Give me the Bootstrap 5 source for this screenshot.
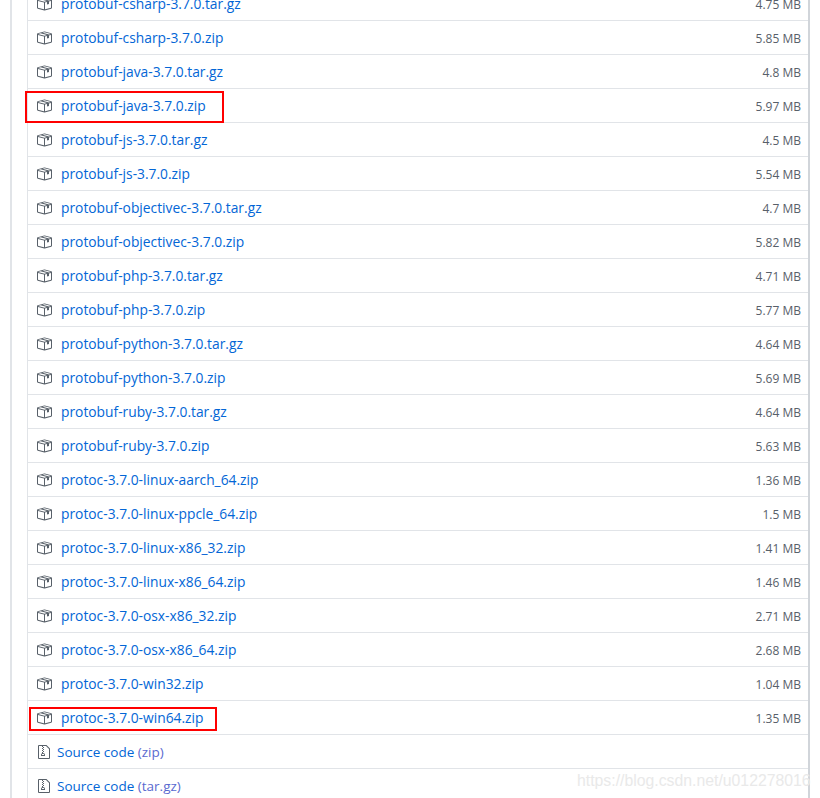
<!DOCTYPE html>
<html lang="en">
<head>
<meta charset="utf-8">
<title>Assets</title>
<link href="https://cdn.jsdelivr.net/npm/bootstrap@5.3.0/dist/css/bootstrap.min.css" rel="stylesheet">
<style>
html,body{height:798px;overflow:hidden;background:#fff}
body{font-family:"Open Sans","Noto Sans",sans-serif;font-size:14px}
.stage{height:798px;overflow:hidden;padding-left:10px;padding-right:10px}
.rail{display:flow-root;border-left:2px solid #e1e4e8;padding-left:15px;height:798px}
.assets{margin-top:-13px;border-left:1px solid #e1e4e8;border-right:2px solid #d1d5da;width:783px}
.asset{height:34px;border-bottom:1px solid #e1e4e8;padding:0 7px 0 8px}
.asset a{color:#0366d6;text-decoration:none;font-weight:500;font-size:13.8px;margin-left:9px;position:relative;top:1px}
.asset a.src{margin-left:7px;font-size:13.5px}
.asset a span{color:#5a6ad0;font-weight:400}
.asset svg{fill:#586069;flex:none}
.asset svg.zipicon{margin-left:2px}
.fsize{color:#586069;font-size:12px;position:relative;top:1px}
.mark-red{position:absolute;border:2px solid #f00;pointer-events:none}
.mark-a{left:25px;top:91px;width:199px;height:32px}
.mark-b{left:29px;top:707px;width:188px;height:24px}
.wm{position:absolute;left:577px;top:769px;color:#e9e9e9;font-family:"Liberation Sans",sans-serif;font-size:15.8px;white-space:nowrap;pointer-events:none}
</style>
</head>
<body>
<svg width="0" height="0" class="position-absolute">
<symbol id="pkg" viewBox="0 0 16 16"><path d="M1 4.27v7.47c0 .45.3.84.75.97l6.5 1.73c.16.05.34.05.5 0l6.5-1.73c.45-.13.75-.52.75-.97V4.27c0-.45-.3-.84-.75-.97l-6.5-1.74a1.4 1.4 0 0 0-.5 0L1.75 3.3c-.45.13-.75.52-.75.97zm7 9.09l-6-1.59V5l6 1.61v6.75zM2 4l2.5-.67L11 5.06l-2.5.67L2 4zm13 7.77l-6 1.59V6.61l2-.55V8.5l2-.53V5.53L15 5v6.77zm-2-7.24L6.5 2.8l2-.53L15 4l-2 .53z"/></symbol>
<symbol id="zip" viewBox="0 0 12 16"><path d="M8.5 1H1a1 1 0 0 0-1 1v12a1 1 0 0 0 1 1h10a1 1 0 0 0 1-1V4.5L8.5 1zM11 14H1V2h3v1h1V2h3l3 3v9zM5 4V3h1v1H5zM4 4h1v1H4V4zm1 2V5h1v1H5zM4 6h1v1H4V6zm1 2V7h1v1H5zM4 9.28A2 2 0 0 0 3 11v1h4v-1a2 2 0 0 0-2-2V8H4v1.28zM6 10v1H4v-1h2z"/></symbol>
</svg>
<div class="stage"><div class="rail"><div class="assets">
<div class="asset d-flex align-items-center"><svg width="16" height="16"><use href="#pkg"/></svg><a href="#">protobuf-csharp-3.7.0.tar.gz</a><small class="fsize ms-auto">4.75 MB</small></div>
<div class="asset d-flex align-items-center"><svg width="16" height="16"><use href="#pkg"/></svg><a href="#">protobuf-csharp-3.7.0.zip</a><small class="fsize ms-auto">5.85 MB</small></div>
<div class="asset d-flex align-items-center"><svg width="16" height="16"><use href="#pkg"/></svg><a href="#">protobuf-java-3.7.0.tar.gz</a><small class="fsize ms-auto">4.8 MB</small></div>
<div class="asset d-flex align-items-center"><svg width="16" height="16"><use href="#pkg"/></svg><a href="#">protobuf-java-3.7.0.zip</a><small class="fsize ms-auto">5.97 MB</small></div>
<div class="asset d-flex align-items-center"><svg width="16" height="16"><use href="#pkg"/></svg><a href="#">protobuf-js-3.7.0.tar.gz</a><small class="fsize ms-auto">4.5 MB</small></div>
<div class="asset d-flex align-items-center"><svg width="16" height="16"><use href="#pkg"/></svg><a href="#">protobuf-js-3.7.0.zip</a><small class="fsize ms-auto">5.54 MB</small></div>
<div class="asset d-flex align-items-center"><svg width="16" height="16"><use href="#pkg"/></svg><a href="#">protobuf-objectivec-3.7.0.tar.gz</a><small class="fsize ms-auto">4.7 MB</small></div>
<div class="asset d-flex align-items-center"><svg width="16" height="16"><use href="#pkg"/></svg><a href="#">protobuf-objectivec-3.7.0.zip</a><small class="fsize ms-auto">5.82 MB</small></div>
<div class="asset d-flex align-items-center"><svg width="16" height="16"><use href="#pkg"/></svg><a href="#">protobuf-php-3.7.0.tar.gz</a><small class="fsize ms-auto">4.71 MB</small></div>
<div class="asset d-flex align-items-center"><svg width="16" height="16"><use href="#pkg"/></svg><a href="#">protobuf-php-3.7.0.zip</a><small class="fsize ms-auto">5.77 MB</small></div>
<div class="asset d-flex align-items-center"><svg width="16" height="16"><use href="#pkg"/></svg><a href="#">protobuf-python-3.7.0.tar.gz</a><small class="fsize ms-auto">4.64 MB</small></div>
<div class="asset d-flex align-items-center"><svg width="16" height="16"><use href="#pkg"/></svg><a href="#">protobuf-python-3.7.0.zip</a><small class="fsize ms-auto">5.69 MB</small></div>
<div class="asset d-flex align-items-center"><svg width="16" height="16"><use href="#pkg"/></svg><a href="#">protobuf-ruby-3.7.0.tar.gz</a><small class="fsize ms-auto">4.64 MB</small></div>
<div class="asset d-flex align-items-center"><svg width="16" height="16"><use href="#pkg"/></svg><a href="#">protobuf-ruby-3.7.0.zip</a><small class="fsize ms-auto">5.63 MB</small></div>
<div class="asset d-flex align-items-center"><svg width="16" height="16"><use href="#pkg"/></svg><a href="#">protoc-3.7.0-linux-aarch_64.zip</a><small class="fsize ms-auto">1.36 MB</small></div>
<div class="asset d-flex align-items-center"><svg width="16" height="16"><use href="#pkg"/></svg><a href="#">protoc-3.7.0-linux-ppcle_64.zip</a><small class="fsize ms-auto">1.5 MB</small></div>
<div class="asset d-flex align-items-center"><svg width="16" height="16"><use href="#pkg"/></svg><a href="#">protoc-3.7.0-linux-x86_32.zip</a><small class="fsize ms-auto">1.41 MB</small></div>
<div class="asset d-flex align-items-center"><svg width="16" height="16"><use href="#pkg"/></svg><a href="#">protoc-3.7.0-linux-x86_64.zip</a><small class="fsize ms-auto">1.46 MB</small></div>
<div class="asset d-flex align-items-center"><svg width="16" height="16"><use href="#pkg"/></svg><a href="#">protoc-3.7.0-osx-x86_32.zip</a><small class="fsize ms-auto">2.71 MB</small></div>
<div class="asset d-flex align-items-center"><svg width="16" height="16"><use href="#pkg"/></svg><a href="#">protoc-3.7.0-osx-x86_64.zip</a><small class="fsize ms-auto">2.68 MB</small></div>
<div class="asset d-flex align-items-center"><svg width="16" height="16"><use href="#pkg"/></svg><a href="#">protoc-3.7.0-win32.zip</a><small class="fsize ms-auto">1.04 MB</small></div>
<div class="asset d-flex align-items-center"><svg width="16" height="16"><use href="#pkg"/></svg><a href="#">protoc-3.7.0-win64.zip</a><small class="fsize ms-auto">1.35 MB</small></div>
<div class="asset d-flex align-items-center"><svg class="zipicon" width="12" height="16"><use href="#zip"/></svg><a class="src" href="#">Source code <span>(zip)</span></a></div>
<div class="asset d-flex align-items-center"><svg class="zipicon" width="12" height="16"><use href="#zip"/></svg><a class="src" href="#">Source code <span>(tar.gz)</span></a></div>
</div></div></div>
<div class="mark-red mark-a"></div>
<div class="mark-red mark-b"></div>
<div class="wm">https://blog.csdn.net/u012278016</div>
</body>
</html>
